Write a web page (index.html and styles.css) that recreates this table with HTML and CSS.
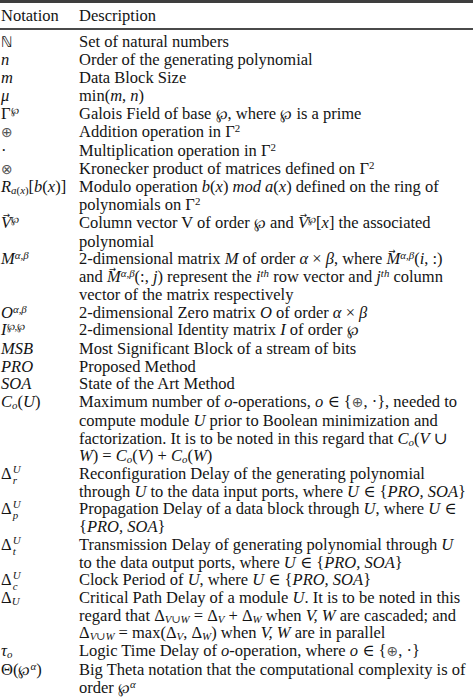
FILE: index.html
```html
<!DOCTYPE html>
<html>
<head>
<meta charset="utf-8">
<link rel="stylesheet" href="styles.css">
</head>
<body>
<div class="tbl">
  <div class="row hdr">
    <div class="nt">Notation</div>
    <div class="ds"><div class="ln">Description</div></div>
  </div>
  <div class="body">
    <div class="row"><div class="nt"><span class="bb">ℕ</span></div><div class="ds"><div class="ln">Set of natural numbers</div></div></div>
    <div class="row"><div class="nt"><i>n</i></div><div class="ds"><div class="ln">Order of the generating polynomial</div></div></div>
    <div class="row"><div class="nt"><i>m</i></div><div class="ds"><div class="ln">Data Block Size</div></div></div>
    <div class="row"><div class="nt"><i>μ</i></div><div class="ds"><div class="ln">min(<i>m</i>, <i>n</i>)</div></div></div>
    <div class="row"><div class="nt">Γ<sup class="sp"><span class="wp">℘</span></sup></div><div class="ds"><div class="ln">Galois Field of base <span class="wp">℘</span>, where <span class="wp">℘</span> is a prime</div></div></div>
    <div class="row"><div class="nt"><span class="op">⊕</span></div><div class="ds"><div class="ln">Addition operation in Γ<sup class="sp">2</sup></div></div></div>
    <div class="row"><div class="nt">·</div><div class="ds"><div class="ln">Multiplication operation in Γ<sup class="sp">2</sup></div></div></div>
    <div class="row"><div class="nt"><span class="op">⊗</span></div><div class="ds"><div class="ln">Kronecker product of matrices defined on Γ<sup class="sp">2</sup></div></div></div>
    <div class="row"><div class="nt"><i>R</i><sub class="sb"><i>a</i>(<i>x</i>)</sub>[<i>b</i>(<i>x</i>)]</div><div class="ds"><div class="ln">Modulo operation <i>b</i>(<i>x</i>) <i>mod a</i>(<i>x</i>) defined on the ring of</div><div class="ln">polynomials on Γ<sup class="sp">2</sup></div></div></div>
    <div class="row"><div class="nt"><i class="vec">V</i><sup class="sp"><span class="wp">℘</span></sup></div><div class="ds"><div class="ln">Column vector V of order <span class="wp">℘</span> and <i class="vec">V</i><sup class="sp"><span class="wp">℘</span></sup>[<i>x</i>] the associated</div><div class="ln">polynomial</div></div></div>
    <div class="row"><div class="nt"><i>M</i><sup class="sp"><i>α,β</i></sup></div><div class="ds"><div class="ln">2-dimensional matrix <i>M</i> of order <i>α</i> × <i>β</i>, where <i class="vec">M</i><sup class="sp"><i>α,β</i></sup>(<i>i</i>, :)</div><div class="ln">and <i class="vec">M</i><sup class="sp"><i>α,β</i></sup>(:, <i>j</i>) represent the <i>i</i><sup class="sp"><i>th</i></sup> row vector and <i>j</i><sup class="sp"><i>th</i></sup> column</div><div class="ln">vector of the matrix respectively</div></div></div>
    <div class="row"><div class="nt"><i>O</i><sup class="sp"><i>α,β</i></sup></div><div class="ds"><div class="ln">2-dimensional Zero matrix <i>O</i> of order <i>α</i> × <i>β</i></div></div></div>
    <div class="row"><div class="nt"><i>I</i><sup class="sp"><span class="wp">℘</span>,<span class="wp">℘</span></sup></div><div class="ds"><div class="ln">2-dimensional Identity matrix <i>I</i> of order <span class="wp">℘</span></div></div></div>
    <div class="row"><div class="nt"><i>MSB</i></div><div class="ds"><div class="ln">Most Significant Block of a stream of bits</div></div></div>
    <div class="row"><div class="nt"><i>PRO</i></div><div class="ds"><div class="ln">Proposed Method</div></div></div>
    <div class="row"><div class="nt"><i>SOA</i></div><div class="ds"><div class="ln">State of the Art Method</div></div></div>
    <div class="row"><div class="nt"><i>C</i><sub class="sb"><i>o</i></sub>(<i>U</i>)</div><div class="ds"><div class="ln">Maximum number of <i>o</i>-operations, <i>o</i> ∈ {<span class="op">⊕</span>, ·}, needed to</div><div class="ln">compute module <i>U</i> prior to Boolean minimization and</div><div class="ln">factorization. It is to be noted in this regard that <i>C</i><sub class="sb"><i>o</i></sub>(<i>V</i> ∪</div><div class="ln"><i>W</i>) = <i>C</i><sub class="sb"><i>o</i></sub>(<i>V</i>) + <i>C</i><sub class="sb"><i>o</i></sub>(<i>W</i>)</div></div></div>
    <div class="row"><div class="nt">Δ<span class="stk"><i>U</i><i>r</i></span></div><div class="ds"><div class="ln">Reconfiguration Delay of the generating polynomial</div><div class="ln">through <i>U</i> to the data input ports, where <i>U</i> ∈ {<i>PRO, SOA</i>}</div></div></div>
    <div class="row"><div class="nt">Δ<span class="stk"><i>U</i><i>p</i></span></div><div class="ds"><div class="ln">Propagation Delay of a data block through <i>U</i>, where <i>U</i> ∈</div><div class="ln">{<i>PRO, SOA</i>}</div></div></div>
    <div class="row"><div class="nt">Δ<span class="stk"><i>U</i><i>t</i></span></div><div class="ds"><div class="ln">Transmission Delay of generating polynomial through <i>U</i></div><div class="ln">to the data output ports, where <i>U</i> ∈ {<i>PRO, SOA</i>}</div></div></div>
    <div class="row"><div class="nt">Δ<span class="stk"><i>U</i><i>c</i></span></div><div class="ds"><div class="ln">Clock Period of <i>U</i>, where <i>U</i> ∈ {<i>PRO, SOA</i>}</div></div></div>
    <div class="row"><div class="nt">Δ<sub class="sb"><i>U</i></sub></div><div class="ds"><div class="ln">Critical Path Delay of a module <i>U</i>. It is to be noted in this</div><div class="ln">regard that Δ<sub class="sb"><i>V</i>∪<i>W</i></sub> = Δ<sub class="sb"><i>V</i></sub> + Δ<sub class="sb"><i>W</i></sub> when <i>V, W</i> are cascaded; and</div><div class="ln">Δ<sub class="sb"><i>V</i>∪<i>W</i></sub> = max(Δ<sub class="sb"><i>V</i></sub>, Δ<sub class="sb"><i>W</i></sub>) when <i>V, W</i> are in parallel</div></div></div>
    <div class="row"><div class="nt"><i>τ</i><sub class="sb"><i>o</i></sub></div><div class="ds"><div class="ln">Logic Time Delay of <i>o</i>-operation, where <i>o</i> ∈ {<span class="op">⊕</span>, ·}</div></div></div>
    <div class="row"><div class="nt">Θ(<span class="wp">℘</span><sup class="sp"><i>α</i></sup>)</div><div class="ds"><div class="ln">Big Theta notation that the computational complexity is of</div><div class="ln">order <span class="wp">℘</span><sup class="sp"><i>α</i></sup></div></div></div>
  </div>
</div>
</body>
</html>
```

FILE: styles.css
```css
html, body {
  margin: 0;
  padding: 0;
  background: #ffffff;
}

body {
  color: #141414;
  font-family: "Liberation Serif", "DejaVu Serif", serif;
  font-size: 16.5px;
}

.tbl {
  width: 473px;
  border-top: 3px solid #3e3e3e;
  border-bottom: 4px solid #3e3e3e;
}

.row {
  display: grid;
  grid-template-columns: 79px 1fr;
  align-items: start;
}

.hdr {
  border-bottom: 2px solid #4a4a4a;
  padding: 4px 0 3px;
  line-height: 17.67px;
}

.body {
  padding: 3px 0 1px;
}

.nt {
  padding-left: 1px;
  line-height: 17.72px;
  white-space: nowrap;
}

.ds {
  padding-right: 1px;
}

.ln {
  line-height: 17.72px;
  white-space: nowrap;
}

.sp, .sb {
  font-size: 0.66em;
  line-height: 0;
}

.sp {
  vertical-align: 0.45em;
}

.sb {
  vertical-align: -0.15em;
}

.wp {
  font-family: "DejaVu Serif", serif;
  font-size: 0.85em;
}

.sp .wp {
  font-size: 0.9em;
}

.op {
  font-family: "DejaVu Sans", sans-serif;
  font-size: 0.85em;
  color: #555;
}

.bb {
  font-family: "DejaVu Sans", sans-serif;
  font-size: 0.9em;
}

.vec {
  position: relative;
}

.vec::after {
  content: "→";
  position: absolute;
  left: 0.2em;
  top: -2px;
  font-family: "DejaVu Sans", sans-serif;
  font-size: 8.5px;
  line-height: 1;
  font-style: normal;
}

.stk {
  display: inline-flex;
  flex-direction: column;
  font-size: 0.66em;
  line-height: 1;
  vertical-align: 0.55em;
  margin: -6px 0 -6px 1px;
}
```
